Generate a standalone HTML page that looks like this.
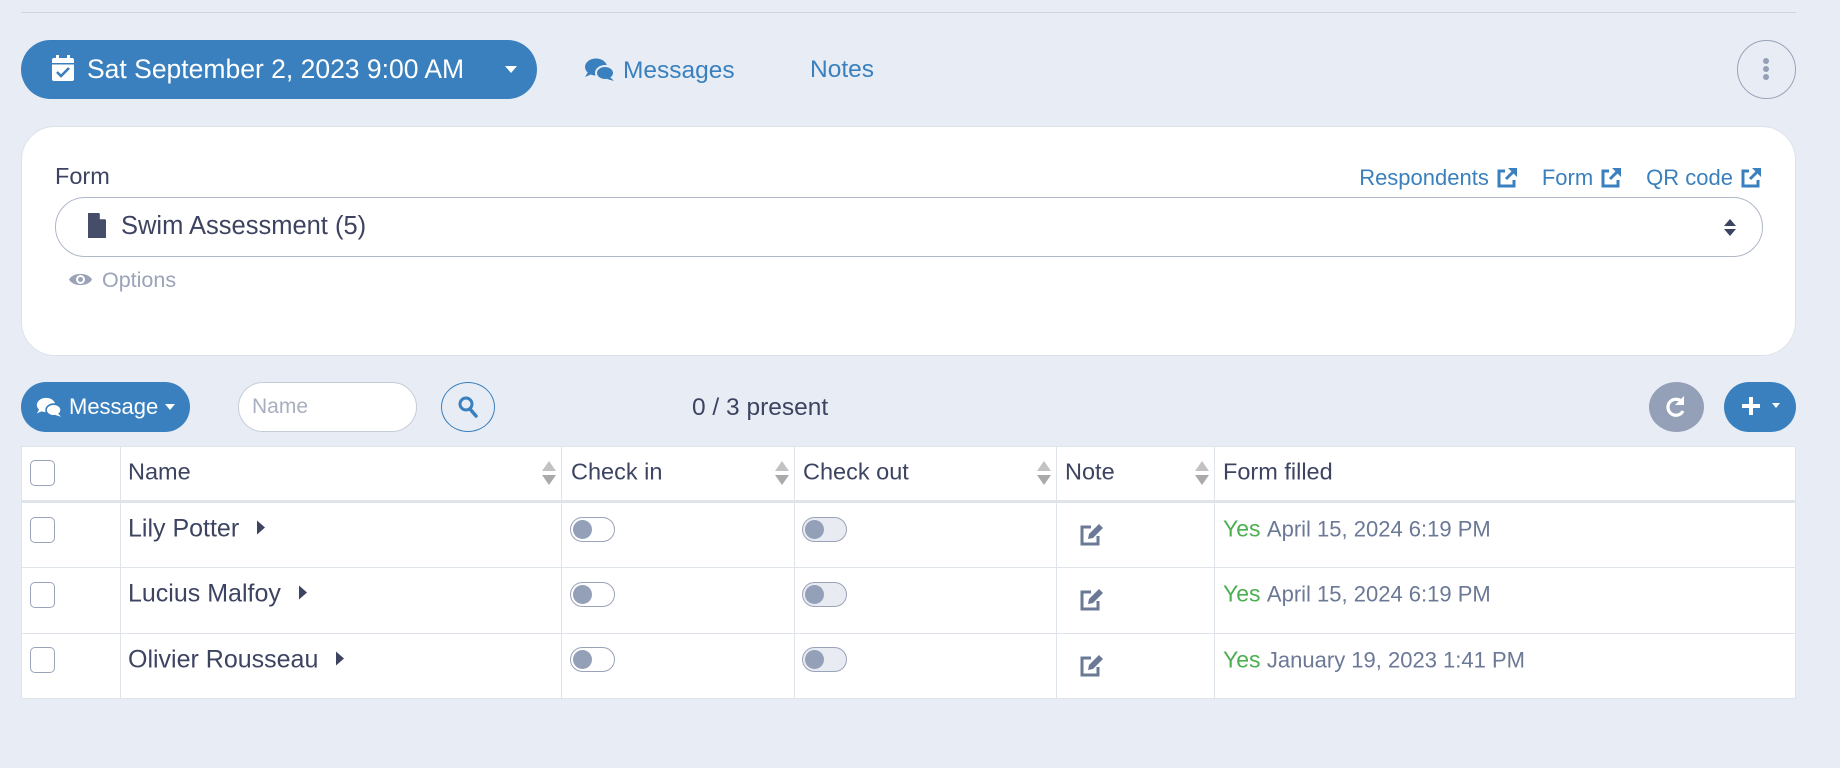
<!DOCTYPE html>
<html><head><meta charset="utf-8"><style>
*{box-sizing:border-box;margin:0;padding:0}
body{width:1840px;height:768px;background:#e8edf5;font-family:"Liberation Sans",sans-serif;color:#3d4461;position:relative;overflow:hidden}
.a{position:absolute}
.blue{color:#3a80be}
.vc{display:flex;align-items:center}
.cb{position:absolute;width:25px;height:26px;border:1.5px solid #9aa3b8;border-radius:5px;background:#fff}
.tg{position:absolute;width:45px;height:25px;border:1.5px solid #9aa3b8;border-radius:13px;background:#fff}
.tg i{position:absolute;left:2px;top:2px;width:19px;height:19px;border-radius:50%;background:#94a0b8}
.tg.g{background:#e8ebf2}
.th{position:absolute;top:472px;transform:translateY(-50%);font-size:23.5px;color:#3d4461}
.sort{position:absolute;top:461px;width:14px;height:24px}
.vl{position:absolute;top:446px;height:253px;width:1px;background:#dfe3ea}
.hl{position:absolute;left:21px;width:1775px;height:1px;background:#dfe3ea}
.nm{position:absolute;left:128px;font-size:25px;transform:translateY(-50%)}
.nm b{display:inline-block;width:0;height:0;border-top:7px solid transparent;border-bottom:7px solid transparent;border-left:8px solid #3d4461;margin-left:18px;vertical-align:2px}
.yes{position:absolute;left:1223px;transform:translateY(-50%);font-size:23px;color:#4caf50}
.yes span{color:#6b7896;font-size:22px}
</style></head><body>
<div class="a" style="left:21px;top:12px;width:1775px;height:1px;background:#cfd5e0"></div>

<div class="a vc" style="left:21px;top:40px;width:516px;height:59px;border-radius:30px;background:#3a80be;color:#fff;font-size:26.5px">
  <svg class="a" style="left:31px;top:15px" width="22" height="26" viewBox="0 0 22 26"><rect x="4" y="0" width="3" height="6" fill="#fff"/><rect x="15" y="0" width="3" height="6" fill="#fff"/><rect x="0" y="3" width="22" height="23" rx="2" fill="#fff"/><rect x="0" y="8" width="22" height="1.5" fill="#3a80be"/><path d="M5 17l4 4 8-8" stroke="#3a80be" stroke-width="2.6" fill="none"/></svg>
  <span class="a" style="left:66px">Sat September 2, 2023 9:00 AM</span>
  <span class="a" style="left:484px;top:26px;width:0;height:0;border-left:6px solid transparent;border-right:6px solid transparent;border-top:7px solid #fff"></span>
</div>
<svg class="a" style="left:584px;top:58px" width="31" height="24" viewBox="0 0 31 24"><ellipse cx="12" cy="9" rx="11" ry="8.5" fill="#3a80be"/><path d="M4 14l-3 5 7-3z" fill="#3a80be"/><ellipse cx="21" cy="15" rx="9" ry="7" fill="#3a80be" stroke="#e8edf5" stroke-width="2"/><path d="M26 19l4 4-7-2z" fill="#3a80be"/></svg>
<div class="a blue" style="left:623px;top:57px;font-size:24.5px">Messages</div>
<div class="a blue" style="left:810px;top:56px;font-size:24.5px">Notes</div>
<div class="a" style="left:1737px;top:40px;width:59px;height:59px;border:1.5px solid #9aa3b8;border-radius:50%"></div>
<div class="a" style="left:1763px;top:58px;width:6px;height:6px;border-radius:50%;background:#94a0b8;box-shadow:0 8px 0 #94a0b8,0 16px 0 #94a0b8"></div>

<div class="a" style="left:21px;top:126px;width:1775px;height:230px;background:#fff;border-radius:34px;border:1px solid #dde2ea"></div>
<div class="a" style="left:55px;top:163px;font-size:23.5px">Form</div>
<div class="a blue vc" style="right:78px;top:165px;font-size:22px;gap:0">
  <span>Respondents</span><svg style="margin-left:7px" width="22" height="22" viewBox="0 0 22 22"><path d="M9 4H3v15h15v-6" stroke="#3a80be" stroke-width="3" fill="none"/><path d="M12 1h9v9z" fill="#3a80be"/><path d="M19 3l-9 9" stroke="#3a80be" stroke-width="3"/></svg>
  <span style="margin-left:24px">Form</span><svg style="margin-left:7px" width="22" height="22" viewBox="0 0 22 22"><path d="M9 4H3v15h15v-6" stroke="#3a80be" stroke-width="3" fill="none"/><path d="M12 1h9v9z" fill="#3a80be"/><path d="M19 3l-9 9" stroke="#3a80be" stroke-width="3"/></svg>
  <span style="margin-left:24px">QR code</span><svg style="margin-left:7px" width="22" height="22" viewBox="0 0 22 22"><path d="M9 4H3v15h15v-6" stroke="#3a80be" stroke-width="3" fill="none"/><path d="M12 1h9v9z" fill="#3a80be"/><path d="M19 3l-9 9" stroke="#3a80be" stroke-width="3"/></svg>
</div>
<div class="a" style="left:55px;top:197px;width:1708px;height:60px;border:1.5px solid #b0b8c8;border-radius:30px"></div>
<svg class="a" style="left:88px;top:213px" width="18" height="25" viewBox="0 0 18 25"><path d="M0 0h11l7 7v18H0z" fill="#454d69"/><path d="M11.8 0v6.2h6.2" fill="#fff"/></svg>
<div class="a" style="left:121px;top:212px;font-size:25.5px">Swim Assessment (5)</div>
<svg class="a" style="left:1724px;top:219px" width="12" height="17" viewBox="0 0 12 17"><path d="M6 0l6 7H0z M0 10h12l-6 7z" fill="#3d4461"/></svg>
<svg class="a" style="left:69px;top:271px" width="23" height="17" viewBox="0 0 23 17"><path d="M0 8.5C4 1 19 1 23 8.5 19 16 4 16 0 8.5z" fill="#9aa3b8"/><circle cx="11.5" cy="8.5" r="4.5" fill="#fff"/><circle cx="11.5" cy="8.5" r="2.5" fill="#9aa3b8"/></svg>
<div class="a" style="left:102px;top:268px;font-size:21.5px;color:#9aa3b8">Options</div>

<div class="a vc" style="left:21px;top:382px;width:169px;height:50px;border-radius:25px;background:#3a80be;color:#fff;font-size:22px">
  <svg class="a" style="left:15px;top:15px" width="26" height="21" viewBox="0 0 31 24"><ellipse cx="12" cy="9" rx="11" ry="8.5" fill="#fff"/><path d="M4 14l-3 5 7-3z" fill="#fff"/><ellipse cx="21" cy="15" rx="9" ry="7" fill="#fff" stroke="#3a80be" stroke-width="2"/><path d="M26 19l4 4-7-2z" fill="#fff"/></svg>
  <span class="a" style="left:48px">Message</span>
  <span class="a" style="left:144px;top:22px;border-left:5px solid transparent;border-right:5px solid transparent;border-top:6px solid #fff"></span>
</div>
<div class="a vc" style="left:238px;top:382px;width:179px;height:50px;border:1.5px solid #c5ccd8;border-radius:25px;background:#fff;padding-left:13px;font-size:21px;color:#a8afc0">Name</div>
<div class="a" style="left:441px;top:382px;width:54px;height:50px;border:1.5px solid #3a80be;border-radius:50%"></div>
<svg class="a" style="left:458px;top:396px" width="20" height="22" viewBox="0 0 20 22"><circle cx="8" cy="8" r="6" stroke="#3a80be" stroke-width="3" fill="none"/><path d="M12 13l6 7" stroke="#3a80be" stroke-width="3.5" stroke-linecap="round"/></svg>
<div class="a" style="left:692px;top:394px;font-size:24.5px">0 / 3 present</div>
<div class="a" style="left:1649px;top:382px;width:55px;height:50px;border-radius:50%;background:#94a0b8"></div>
<svg class="a" style="left:1665px;top:395px" width="22" height="24" viewBox="0 0 22 24"><path d="M17 7A8 8 0 1 0 18 16" stroke="#fff" stroke-width="3.2" fill="none"/><path d="M19 1v9h-9z" fill="#fff"/></svg>
<div class="a" style="left:1724px;top:382px;width:72px;height:50px;border-radius:25px;background:#3a80be"></div>
<div class="a" style="left:1742px;top:404px;width:18px;height:4px;background:#fff"></div>
<div class="a" style="left:1749px;top:397px;width:4px;height:18px;background:#fff"></div>
<div class="a" style="left:1772px;top:403px;border-left:4.5px solid transparent;border-right:4.5px solid transparent;border-top:5px solid #fff"></div>

<div class="a" style="left:21px;top:446px;width:1775px;height:253px;background:#fff;border:1px solid #dfe3ea"></div>
<div class="a" style="left:21px;top:500px;width:1775px;height:3px;background:#dfe3ea"></div>
<div class="hl" style="top:567px"></div>
<div class="hl" style="top:633px"></div>
<div class="vl" style="left:120px"></div>
<div class="vl" style="left:561px"></div>
<div class="vl" style="left:794px"></div>
<div class="vl" style="left:1056px"></div>
<div class="vl" style="left:1214px"></div>

<div class="cb" style="left:30px;top:460px"></div>
<div class="th" style="left:128px">Name</div>
<div class="th" style="left:571px">Check in</div>
<div class="th" style="left:803px">Check out</div>
<div class="th" style="left:1065px">Note</div>
<div class="th" style="left:1223px">Form filled</div>
<svg class="sort" style="left:542px" viewBox="0 0 14 24"><path d="M7 0l7 10H0z" fill="#c2c2c2"/><path d="M0 14h14L7 24z" fill="#aaa"/></svg>
<svg class="sort" style="left:775px" viewBox="0 0 14 24"><path d="M7 0l7 10H0z" fill="#c2c2c2"/><path d="M0 14h14L7 24z" fill="#aaa"/></svg>
<svg class="sort" style="left:1037px" viewBox="0 0 14 24"><path d="M7 0l7 10H0z" fill="#c2c2c2"/><path d="M0 14h14L7 24z" fill="#aaa"/></svg>
<svg class="sort" style="left:1195px" viewBox="0 0 14 24"><path d="M7 0l7 10H0z" fill="#c2c2c2"/><path d="M0 14h14L7 24z" fill="#aaa"/></svg>

<div class="cb" style="left:30px;top:517px"></div>
<div class="nm" style="top:529px">Lily Potter<b></b></div>
<div class="tg" style="left:570px;top:517px"><i></i></div>
<div class="tg g" style="left:802px;top:517px"><i></i></div>
<svg class="a" style="left:1080px;top:524px" width="25" height="22" viewBox="0 0 25 22"><path d="M11 3H2v17h16v-8" stroke="#6b7896" stroke-width="3" fill="none"/><path d="M8 15l1-5 10-10 4 4-10 10z" fill="#6b7896"/></svg>
<div class="yes" style="top:529px">Yes <span>April 15, 2024 6:19 PM</span></div>

<div class="cb" style="left:30px;top:582px"></div>
<div class="nm" style="top:594px">Lucius Malfoy<b></b></div>
<div class="tg" style="left:570px;top:582px"><i></i></div>
<div class="tg g" style="left:802px;top:582px"><i></i></div>
<svg class="a" style="left:1080px;top:589px" width="25" height="22" viewBox="0 0 25 22"><path d="M11 3H2v17h16v-8" stroke="#6b7896" stroke-width="3" fill="none"/><path d="M8 15l1-5 10-10 4 4-10 10z" fill="#6b7896"/></svg>
<div class="yes" style="top:594px">Yes <span>April 15, 2024 6:19 PM</span></div>

<div class="cb" style="left:30px;top:647px"></div>
<div class="nm" style="top:660px">Olivier Rousseau<b></b></div>
<div class="tg" style="left:570px;top:647px"><i></i></div>
<div class="tg g" style="left:802px;top:647px"><i></i></div>
<svg class="a" style="left:1080px;top:655px" width="25" height="22" viewBox="0 0 25 22"><path d="M11 3H2v17h16v-8" stroke="#6b7896" stroke-width="3" fill="none"/><path d="M8 15l1-5 10-10 4 4-10 10z" fill="#6b7896"/></svg>
<div class="yes" style="top:660px">Yes <span>January 19, 2023 1:41 PM</span></div>
</body></html>
